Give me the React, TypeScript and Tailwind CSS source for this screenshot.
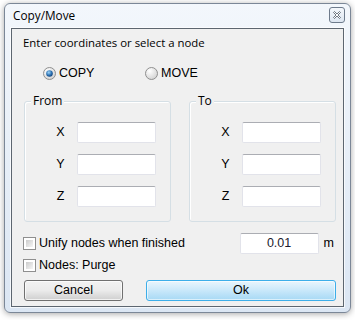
import React from 'react';

const ui = "font-['Open_Sans','Noto_Sans',sans-serif]";
const classic = "font-['Liberation_Sans',Arial,sans-serif]";

function Radio({ checked }: { checked?: boolean }) {
  return (
    <svg width="13" height="13" viewBox="0 0 13 13" className="shrink-0">
      <defs>
        <radialGradient id="rbg" cx="0.35" cy="0.3" r="0.8">
          <stop offset="0" stopColor="#ffffff" />
          <stop offset="1" stopColor="#cfcfcf" />
        </radialGradient>
        <radialGradient id="rdot" cx="0.4" cy="0.35" r="0.7">
          <stop offset="0" stopColor="#9fd6fb" />
          <stop offset="0.6" stopColor="#2a6fb0" />
          <stop offset="1" stopColor="#113f77" />
        </radialGradient>
      </defs>
      <circle cx="6.5" cy="6.5" r="6" fill="url(#rbg)" stroke="#8f8f8f" strokeWidth="1" />
      {checked && <circle cx="6.5" cy="6.5" r="3.3" fill="url(#rdot)" />}
    </svg>
  );
}

function Check() {
  return (
    <span className="w-[13px] h-[13px] shrink-0 border border-[#8f8f8f] bg-white p-[2px] flex">
      <span className="flex-1 bg-linear-to-br from-[#cbcbcb] to-[#f6f6f6]" />
    </span>
  );
}

function Field() {
  return (
    <div className="w-[79px] h-[21px] bg-white border border-[#e2e3ea] border-t-[#abadb3] rounded-[2px]" />
  );
}

function Group({ title }: { title: string }) {
  return (
    <div className="flex-1 flex flex-col border border-[#d5dfe5] rounded-[3px] shadow-[inset_1px_1px_0_#ffffff] pb-[14px]">
      <span className={`-mt-[9px] ml-[6px] px-[2px] self-start bg-[#f0f0f0] leading-[16px] text-[12px] text-black ${ui}`}>
        {title}
      </span>
      <div className="flex flex-col gap-[11px] mt-[13px]">
        {['X', 'Y', 'Z'].map((l) => (
          <div key={l} className="flex items-center pl-[28px]">
            <span className={`w-[15px] text-center text-[12.5px] text-black ${classic}`}>{l}</span>
            <span className="ml-[9px]">
              <Field />
            </span>
          </div>
        ))}
      </div>
    </div>
  );
}

export default function App() {
  return (
    <div className="w-[355px] h-[320px] bg-white pl-[4px] pt-[3px]">
      <div className="w-[347px] h-[310px] flex flex-col border border-[#7b8797] rounded-[6px] bg-linear-to-b from-[#f3f7fc] to-[#dbe6f3] shadow-[0_1px_6px_rgba(0,0,0,0.35)] px-[6px] pb-[5px]">
        <div className="h-[24px] flex items-center pl-[2px]">
          <span className={`text-[11.8px] text-black ${ui}`}>Copy/Move</span>
          <span className="ml-auto mr-[-1px] mt-[-3px] w-[16px] h-[16px] rounded-[3px] border border-[#6e7b8c] bg-linear-to-b from-[#f4f7fb] to-[#dde6f1] flex items-center justify-center">
            <svg width="8" height="8" viewBox="0 0 8 8">
              <path
                d="M0.5 1.5 L1.5 0.5 L4 3 L6.5 0.5 L7.5 1.5 L5 4 L7.5 6.5 L6.5 7.5 L4 5 L1.5 7.5 L0.5 6.5 L3 4 Z"
                fill="#ffffff"
                stroke="#4a5563"
                strokeWidth="0.8"
                strokeLinejoin="round"
              />
            </svg>
          </span>
        </div>

        <div className="flex-1 flex flex-col bg-[#f0f0f0] border border-[#5d6670] shadow-[0_0_0_1px_rgba(255,255,255,0.7)]">
          <div className={`mt-[6px] ml-[11px] h-[16px] leading-[16px] text-[11.4px] text-black ${ui}`}>
            Enter coordinates or select a node
          </div>

          <div className={`mt-[14px] h-[16px] flex items-center ml-[31px] text-[12.5px] text-black ${classic}`}>
            <label className="w-[102px] flex items-center gap-[3px]">
              <Radio checked />
              <span>COPY</span>
            </label>
            <label className="flex items-center gap-[3px]">
              <Radio />
              <span>MOVE</span>
            </label>
          </div>

          <div className="mt-[20px] mx-[12px] mr-[7px] flex gap-[18px]">
            <Group title="From" />
            <Group title="To" />
          </div>

          <div className={`mt-[11px] h-[21px] flex items-center pl-[11px] text-[12.5px] text-black ${classic}`}>
            <label className="flex items-center gap-[3px]">
              <Check />
              <span>Unify nodes when finished</span>
            </label>
            <span className="ml-auto w-[79px] h-[21px] bg-white border border-[#e2e3ea] border-t-[#abadb3] rounded-[2px] flex items-center justify-center text-[#1a1a2e]">
              0.01
            </span>
            <span className="ml-[5px] mr-[9px]">m</span>
          </div>

          <div className={`mt-[3px] h-[16px] flex items-center pl-[11px] text-[12.5px] text-black ${classic}`}>
            <label className="flex items-center gap-[3px]">
              <Check />
              <span>Nodes: Purge</span>
            </label>
          </div>

          <div className={`mt-[7px] flex pl-[12px] gap-[23px] text-[12.5px] text-black ${classic}`}>
            <button className="w-[99px] h-[21px] rounded-[3px] border border-[#707070] bg-linear-to-b from-[#f2f2f2] via-[#ebebeb] to-[#cfcfcf] shadow-[inset_0_0_0_1px_rgba(255,255,255,0.7)]">
              Cancel
            </button>
            <button className="w-[190px] h-[21px] rounded-[3px] border border-[#3daee9] bg-linear-to-b from-[#eaf6fd] via-[#c9e8fa] to-[#a7d9f5] shadow-[inset_0_0_0_1px_rgba(255,255,255,0.6)]">
              Ok
            </button>
          </div>
        </div>
      </div>
    </div>
  );
}
